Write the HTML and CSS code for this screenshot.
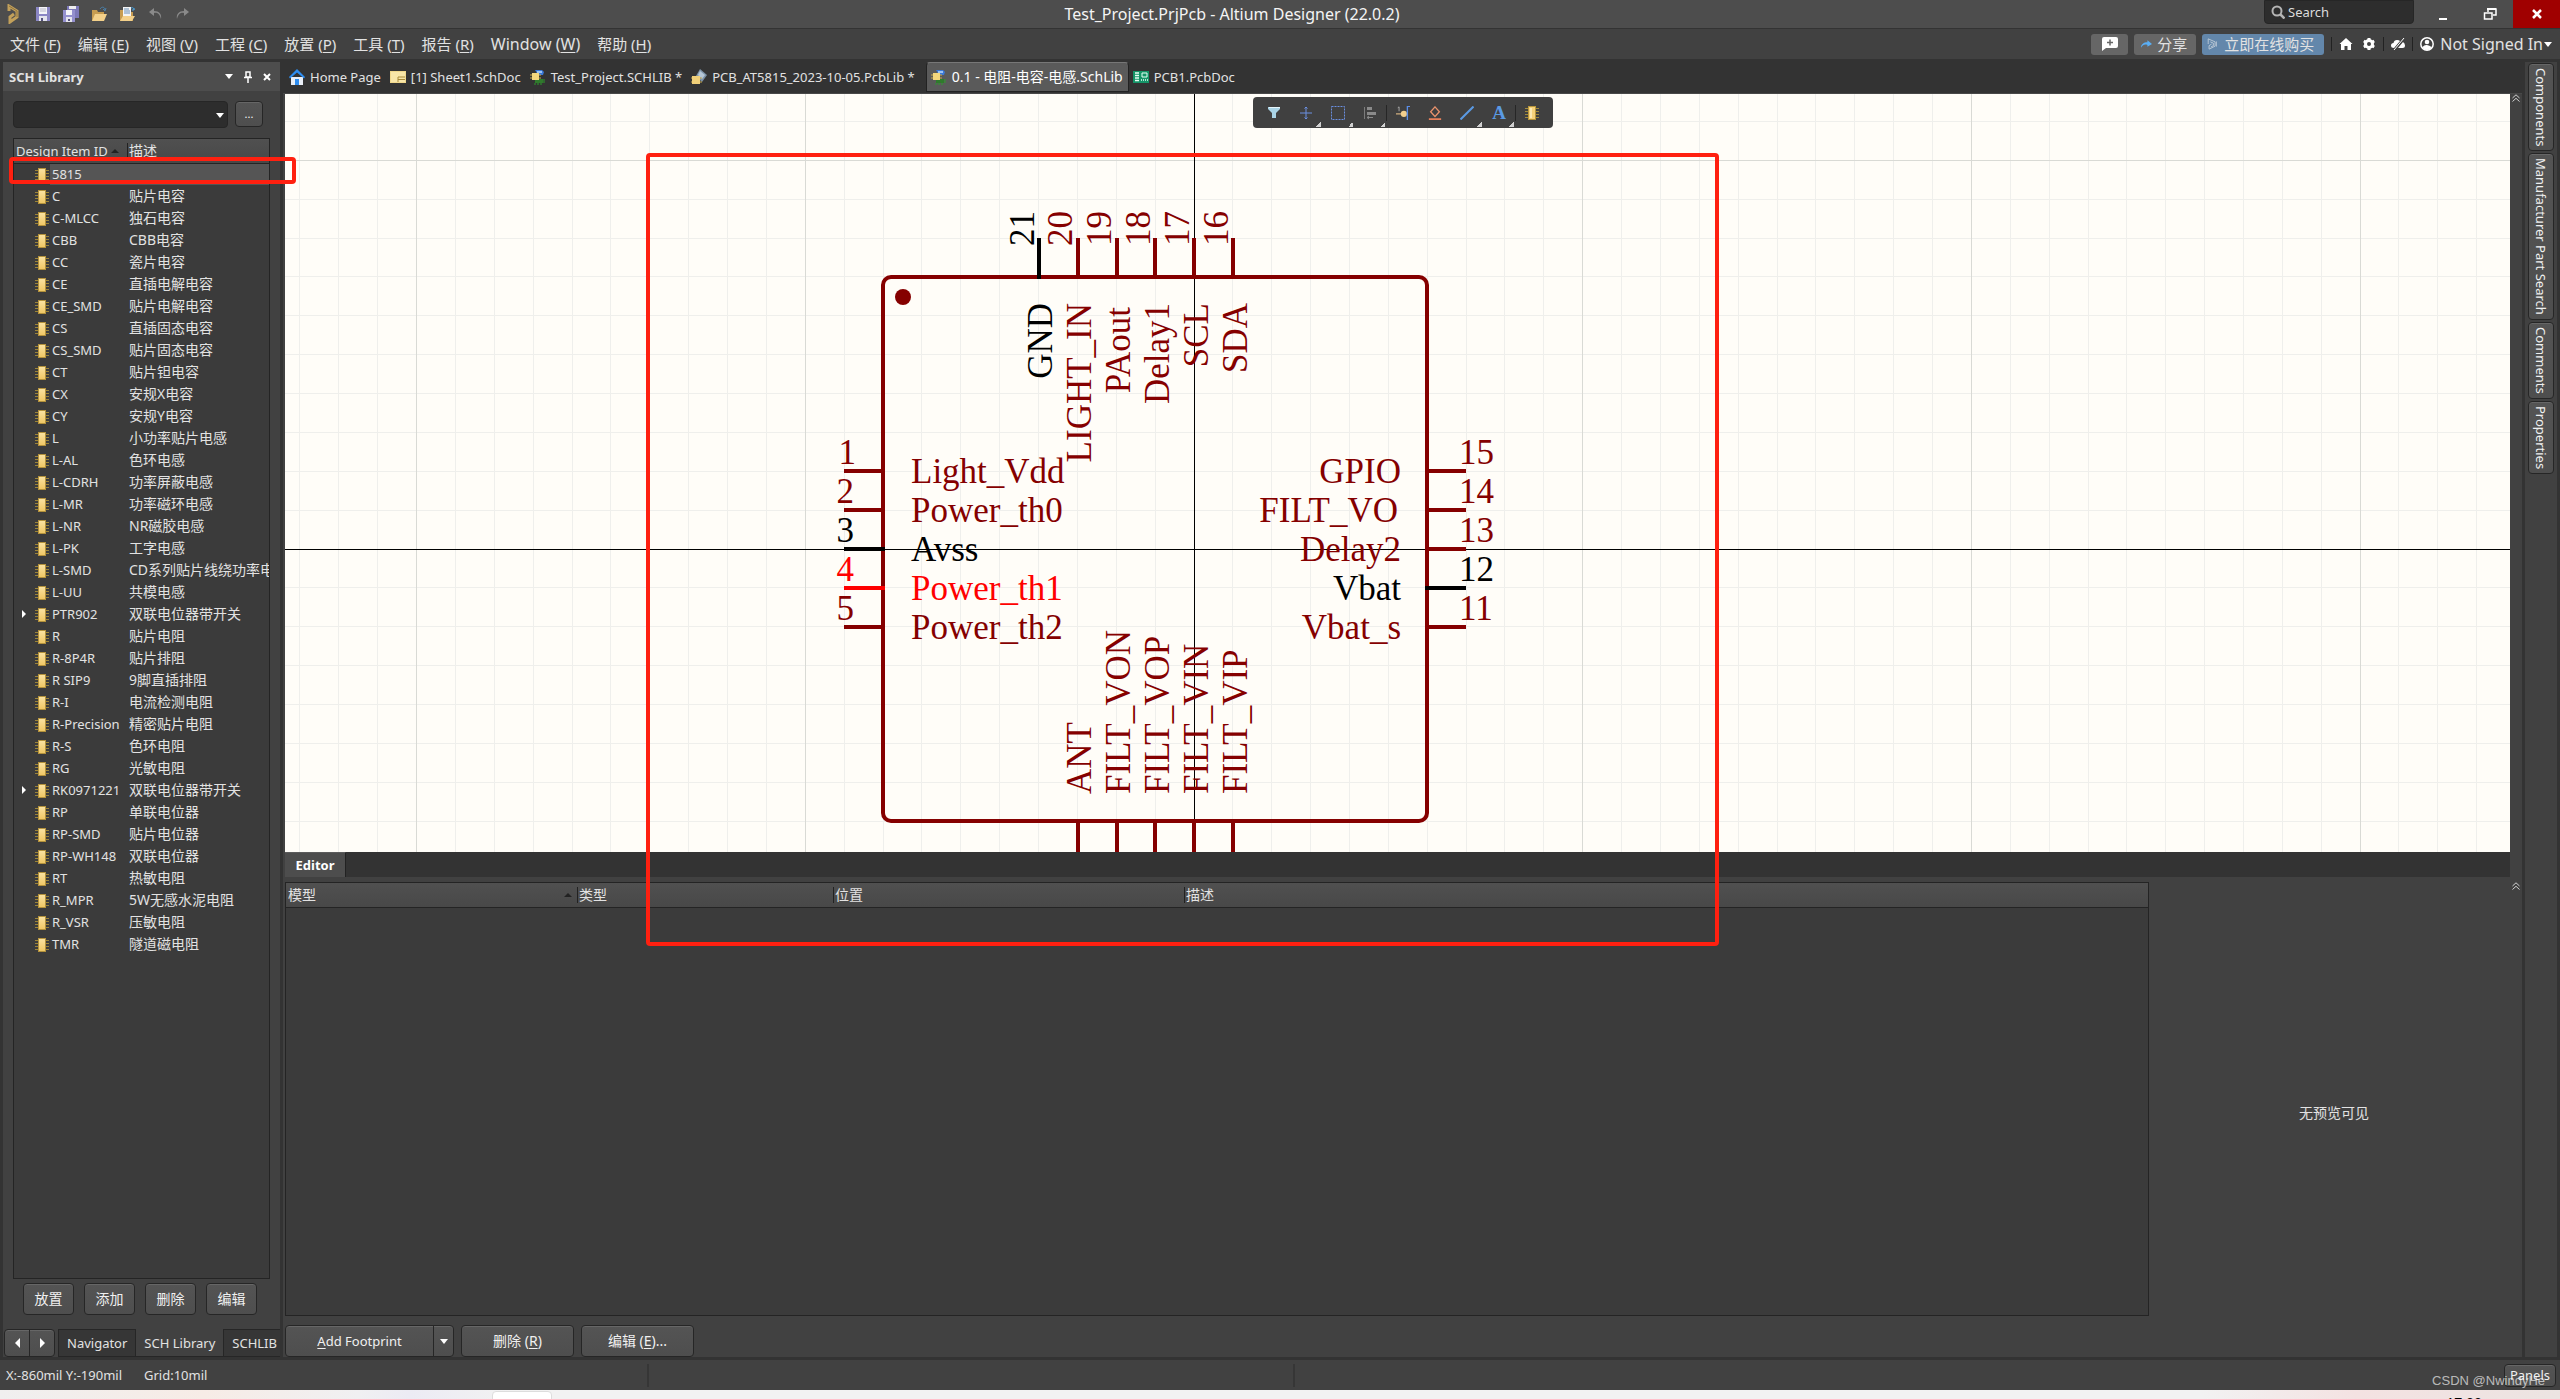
FILE: index.html
```html
<!DOCTYPE html>
<html lang="zh-CN">
<head>
<meta charset="utf-8">
<title>Test_Project.PrjPcb - Altium Designer (22.0.2)</title>
<link rel="stylesheet" href="styles.css">
</head>
<body>
<svg class="defs" aria-hidden="true">
  <symbol id="i-schlib" viewBox="0 0 16 16"><path d="M5 1h7l2 2-1 3H8z" fill="#3a78d8"/><path d="M7 2h5v2H7z" fill="#9cc4f4"/><path d="M5 10h8v4H5z" fill="#2f7a2c"/><path d="M5 14v2M8 14v2M11 14v2M13 11h2M13 13h2" stroke="#2f9a2c"/><rect x="2" y="4" width="7" height="7" fill="#f2d67c"/><path d="M0 6h2M0 9h2M9 6h2M9 9h2" stroke="#c9a94a"/></symbol>
  <symbol id="i-chip" viewBox="0 0 14 14"><path d="M0 2.5h14M0 5.500h14M0 8.500h14M0 11.500h14" stroke="#a08a3c"/><rect x="3.500" y=".5" width="7" height="13" fill="#f6d27a" stroke="#b8963c"/><path d="M5 2h2v10H5z" fill="#fbe9b4"/></symbol>
  <symbol id="i-up" viewBox="0 0 8 8"><path d="M.5 4 4 .8 7.500 4M.5 7.500 4 4.300 7.500 7.500" fill="none" stroke="#d0d0d0"/></symbol>
</svg>

<header class="titlebar">
  <div class="quick">
    <svg class="logo" viewBox="0 0 14 20"><path d="M2 7V2l8 5v6l-7 5v-5l4-3" fill="none" stroke="#c2a05a" stroke-width="3"/><path d="M2 2l8 5v6" fill="none" stroke="#8f7440" stroke-width="1"/></svg>
    <button aria-label="保存"><svg viewBox="0 0 16 16"><path d="M1 1h14v14H1z" fill="#8a86c4"/><path d="M4 1h8v7H4z" fill="#f4f4f8"/><path d="M4 10h8v5H4z" fill="#e4e4ee"/><path d="M6 12h2v3H6z" fill="#55527e"/><path d="M5 3h6M5 5h6" stroke="#b9b9c8"/></svg></button>
    <button aria-label="全部保存"><svg viewBox="0 0 16 16"><path d="M4 0h12v12H4z" fill="#7d79b8"/><path d="M6 0h7v3H6z" fill="#eee"/><path d="M0 4h12v12H0z" fill="#9490ce"/><path d="M3 4h6v5H3z" fill="#f4f4f8"/><path d="M3 11h6v5H3z" fill="#e4e4ee"/><path d="M5 13h2v2H5z" fill="#55527e"/></svg></button>
    <button aria-label="打开"><svg viewBox="0 0 16 16"><path d="M1 15V4h5l1 2h6v9z" fill="#c79c50"/><path d="m1 15 3-7h12l-3 7z" fill="#f3d08a"/><path d="M9 3c2-3 5-2 5 1M12 3l2 2 1-3" fill="none" stroke="#4a7fa8"/></svg></button>
    <button aria-label="打开工程"><svg viewBox="0 0 16 16"><path d="M1 15V4h5l1 2h7v9z" fill="#c79c50"/><path d="M4 1h8v10H4z" fill="#f4f4f4"/><path d="M5 3h5M5 5h6M5 7h6" stroke="#6a90b8"/><path d="m1 15 3-5h12l-3 5z" fill="#f3d08a"/><path d="M12 2c2-1 3 0 3 2M13 4h2V2" fill="none" stroke="#4a9fd8"/></svg></button>
    <button aria-label="撤销"><svg viewBox="0 0 16 16"><path d="M7 2 2 6l5 4V7c4-1 6 2 7 6 1-5-2-8-7-8z" fill="#8a8a8a"/></svg></button>
    <button aria-label="重做"><svg viewBox="0 0 16 16"><path d="m9 2 5 4-5 4V7C5 6 3 9 2 13 1 8 4 5 9 5z" fill="#8a8a8a"/></svg></button>
  </div>
  <h1>Test_Project.PrjPcb - Altium Designer (22.0.2)</h1>
  <label class="search"><svg viewBox="0 0 14 14"><circle cx="6" cy="6" r="4.500" fill="none" stroke="#b4b4b4" stroke-width="2"/><path d="m9.500 9.500 4 4" stroke="#b4b4b4" stroke-width="2.500"/></svg><input type="text" placeholder="Search" aria-label="Search"></label>
  <div class="winctl">
    <button aria-label="最小化"><svg viewBox="0 0 14 14"><path d="M3 11h8v2H3z" fill="#fff"/></svg></button>
    <button aria-label="还原"><svg viewBox="0 0 14 14"><path d="M5 5V2h8v6h-3M1.500 6H9v6H1.500z" fill="none" stroke="#fff" stroke-width="1.500"/><path d="M4 2h9" stroke="#fff" stroke-width="2"/></svg></button>
    <button class="close" aria-label="关闭"><svg viewBox="0 0 14 14"><path d="m3 3 8 8M11 3l-8 8" stroke="#fff" stroke-width="2.500"/></svg></button>
  </div>
</header>

<div class="menubar">
  <nav class="menus">
    <button>文件 (<u>F</u>)</button><button>编辑 (<u>E</u>)</button><button>视图 (<u>V</u>)</button><button>工程 (<u>C</u>)</button><button>放置 (<u>P</u>)</button><button>工具 (<u>T</u>)</button><button>报告 (<u>R</u>)</button><button class="latin">Window (<u>W</u>)</button><button>帮助 (<u>H</u>)</button>
  </nav>
  <div class="account">
    <button class="pill note" aria-label="评论"><svg viewBox="0 0 16 14"><path d="M2 0h12q2 0 2 2v7q0 2-2 2H4l-4 3V2q0-2 2-2z" fill="#fff"/><path d="M8 2.500v6M5 5.500h6" stroke="#666" stroke-width="1.500"/></svg></button>
    <button class="pill"><svg viewBox="0 0 12 10"><path d="M7 1l5 4-5 3V6C4 5 2 6 0 9c0-4 3-6 7-6z" fill="#5aaef4"/></svg>分享</button>
    <button class="pill buy"><svg viewBox="0 0 12 14"><path d="M1 5V1l8 3.500v5L2 13V9l3-2M3.500 4.500 7 6v3l-3 1.500M1 7V5M10.500 4v6" fill="none" stroke="#c4d0da"/></svg>立即在线购买</button>
    <i class="sep"></i>
    <button class="ico" aria-label="主页"><svg viewBox="0 0 14 14"><path d="m7 1 6.500 6H12v6H8.500V9h-3v4H2V7H.5z" fill="#fff"/></svg></button>
    <button class="ico" aria-label="设置"><svg viewBox="0 0 14 14"><circle cx="7" cy="7" r="3.500" fill="none" stroke="#fff" stroke-width="3"/><path d="M7 1v2M7 11v2M1.800 4l1.800 1M10.400 9l1.800 1M1.800 10l1.800-1M10.400 5l1.800-1" stroke="#fff" stroke-width="3"/></svg></button>
    <i class="sep"></i>
    <button class="ico" aria-label="离线"><svg viewBox="0 0 14 14"><path d="M3 11Q0 11 0 8.500 0 6 2.500 6 3 3 6 3q2 0 3 1zM7 11l5-6q2 1 2 3.500Q14 11 11.500 11z" fill="#fff"/><path d="M13 1 3 13" stroke="#fff" stroke-width="1"/></svg></button>
    <i class="sep"></i>
    <button class="user"><svg viewBox="0 0 14 14"><circle cx="7" cy="7" r="6.200" fill="none" stroke="#fff" stroke-width="1.500"/><circle cx="7" cy="5" r="2.300" fill="#fff"/><path d="M2.500 10q2-2.500 4.500-2t4.500 2Q10 13 7 13t-4.500-3z" fill="#fff"/></svg>Not Signed In<b class="caret"></b></button>
  </div>
</div>

<div class="workspace">
  <aside class="panel">
    <div class="panel-head"><h2>SCH Library</h2><span class="caret"></span><svg viewBox="0 0 8 12"><path d="M2 1h4v5H2zM0 6.500h8M4 6v6" fill="none" stroke="#fff" stroke-width="1.500"/></svg><svg class="x" viewBox="0 0 8 8"><path d="m1 1 6 6M7 1 1 7" stroke="#fff" stroke-width="2"/></svg></div>
    <div class="filter"><select aria-label="筛选"><option></option></select><span class="caret"></span><button class="btn">...</button></div>
    <div class="listbox">
      <table class="items">
        <thead><tr><th>Design Item ID <span class="sort"></span></th><th>描述</th></tr></thead>
        <tbody>
          <tr class="sel"><td>5815</td><td></td></tr>
          <tr><td>C</td><td>贴片电容</td></tr>
          <tr><td>C-MLCC</td><td>独石电容</td></tr>
          <tr><td>CBB</td><td>CBB电容</td></tr>
          <tr><td>CC</td><td>瓷片电容</td></tr>
          <tr><td>CE</td><td>直插电解电容</td></tr>
          <tr><td>CE_SMD</td><td>贴片电解电容</td></tr>
          <tr><td>CS</td><td>直插固态电容</td></tr>
          <tr><td>CS_SMD</td><td>贴片固态电容</td></tr>
          <tr><td>CT</td><td>贴片钽电容</td></tr>
          <tr><td>CX</td><td>安规X电容</td></tr>
          <tr><td>CY</td><td>安规Y电容</td></tr>
          <tr><td>L</td><td>小功率贴片电感</td></tr>
          <tr><td>L-AL</td><td>色环电感</td></tr>
          <tr><td>L-CDRH</td><td>功率屏蔽电感</td></tr>
          <tr><td>L-MR</td><td>功率磁环电感</td></tr>
          <tr><td>L-NR</td><td>NR磁胶电感</td></tr>
          <tr><td>L-PK</td><td>工字电感</td></tr>
          <tr><td>L-SMD</td><td>CD系列贴片线绕功率电感</td></tr>
          <tr><td>L-UU</td><td>共模电感</td></tr>
          <tr class="node"><td>PTR902</td><td>双联电位器带开关</td></tr>
          <tr><td>R</td><td>贴片电阻</td></tr>
          <tr><td>R-8P4R</td><td>贴片排阻</td></tr>
          <tr><td>R SIP9</td><td>9脚直插排阻</td></tr>
          <tr><td>R-I</td><td>电流检测电阻</td></tr>
          <tr><td>R-Precision</td><td>精密贴片电阻</td></tr>
          <tr><td>R-S</td><td>色环电阻</td></tr>
          <tr><td>RG</td><td>光敏电阻</td></tr>
          <tr class="node"><td>RK0971221</td><td>双联电位器带开关</td></tr>
          <tr><td>RP</td><td>单联电位器</td></tr>
          <tr><td>RP-SMD</td><td>贴片电位器</td></tr>
          <tr><td>RP-WH148</td><td>双联电位器</td></tr>
          <tr><td>RT</td><td>热敏电阻</td></tr>
          <tr><td>R_MPR</td><td>5W无感水泥电阻</td></tr>
          <tr><td>R_VSR</td><td>压敏电阻</td></tr>
          <tr><td>TMR</td><td>隧道磁电阻</td></tr>
        </tbody>
      </table>
    </div>
    <div class="actions"><button class="btn">放置</button><button class="btn">添加</button><button class="btn">删除</button><button class="btn">编辑</button></div>
    <div class="dock">
      <div class="pager btn"><button aria-label="上一个"><span class="left"></span></button><button aria-label="下一个"><span class="right"></span></button></div>
      <div class="dock-tabs"><button>Navigator</button><button class="on">SCH Library</button><button>SCHLIB</button></div>
    </div>
  </aside>

  <main class="editor">
    <nav class="tabs">
      <button><svg viewBox="0 0 16 16"><path d="M2 8h12v8H2z" fill="#e9eef6"/><path d="M8 0 0 8l1 1.500 7-6 7 6L16 8z" fill="#2e8df0"/><path d="M6 10h4v6H6z" fill="#2e8df0"/></svg>Home Page</button>
      <button><svg viewBox="0 0 16 16"><path d="M0 2h16v12H0z" fill="#f0d88c"/><path d="M1 3h14v10H1z" fill="#f8e6a8"/><path d="M8 8h7M8 10.500h7M8 8v5" stroke="#a88b3a"/></svg>[1] Sheet1.SchDoc</button>
      <button><svg viewBox="0 0 16 16"><use href="#i-schlib"/></svg>Test_Project.SCHLIB *</button>
      <button><svg viewBox="0 0 16 16"><path d="m9 0 7 6-5 7-6-6z" fill="#7d93a8"/><path d="m9 2 5 4-3 4-4-4z" fill="#b4c6d6"/><rect x="1" y="7" width="8" height="8" fill="#f0cf78"/><path d="M0 9h1M0 13h1M9 9h2M9 13h2" stroke="#c9a94a"/></svg>PCB_AT5815_2023-10-05.PcbLib *</button>
      <button class="on"><svg viewBox="0 0 16 16"><use href="#i-schlib"/></svg>0.1 - 电阻-电容-电感.SchLib</button>
      <button><svg viewBox="0 0 16 16"><path d="M0 2h16v12H0z" fill="#159468"/><path d="M2 4h4M2 6.500h4M2 9h4M2 11.500h4M8 11h1M10 11h1M12 11h1M14 11h1" stroke="#e6fff4" stroke-width="1.500"/><path d="M9 4h5v4H9z" fill="none" stroke="#e6fff4"/></svg>PCB1.PcbDoc</button>
    </nav>
    <div class="sheet">
      <svg class="drawing">
        <g id="grid" shape-rendering="crispEdges"></g>
        <g class="chip" transform="translate(909 455)">
          <rect x="-311" y="-272" width="544" height="544" rx="8"/>
          <circle cx="-291" cy="-252" r="8"/>
          <path d="M-350-78h39M-350-39h39M-350 78h39M233-78h39M233-39h39M233 0h39M233 78h39M-116-311v39M-77-311v39M-39-311v39M0-311v39M39-311v39M-116 272v39M-77 272v39M-39 272v39M0 272v39M39 272v39"/>
          <path class="blk" d="M-350 0h41M231 39h41M-155-311v41"/>
          <path class="hot" d="M-350 39h41"/>
          <g>
            <text x="-283" y="-66">Light_Vdd</text><text x="-283" y="-27">Power_th0</text><text class="blk" x="-283" y="12">Avss</text><text class="hot" x="-283" y="51">Power_th1</text><text x="-283" y="90">Power_th2</text>
          </g>
          <g text-anchor="end">
            <text x="207" y="-66">GPIO</text><text x="204" y="-27">FILT_VO</text><text x="207" y="12">Delay2</text><text class="blk" x="207" y="51">Vbat</text><text x="207" y="90">Vbat_s</text>
            <text x="-338" y="-85">1</text><text x="-340" y="-46">2</text><text class="blk" x="-340" y="-7">3</text><text class="hot" x="-340" y="32">4</text><text x="-340" y="71">5</text>
          </g>
          <g>
            <text x="265" y="-85">15</text><text x="265" y="-46">14</text><text x="265" y="-7">13</text><text class="blk" x="265" y="32">12</text><text x="265" y="71">11</text>
          </g>
          <g transform="rotate(-90)">
            <text class="blk" x="303" y="-160">21</text><text x="303" y="-122">20</text><text x="303" y="-83">19</text><text x="303" y="-44">18</text><text x="303" y="-5">17</text><text x="303" y="34">16</text>
            <text x="-245" y="-103">ANT</text><text x="-245" y="-64">FILT_VON</text><text x="-245" y="-25">FILT_VOP</text><text x="-245" y="14">FILT_VIN</text><text x="-245" y="53">FILT_VIP</text>
          </g>
          <g transform="rotate(-90)" text-anchor="end">
            <text class="blk" x="246" y="-142">GND</text><text x="246" y="-103">LIGHT_IN</text><text x="242" y="-64">PAout</text><text x="246" y="-25">Delay1</text><text x="246" y="14">SCL</text><text x="246" y="53">SDA</text>
          </g>
        </g>
      </svg>
      <div class="tools">
        <button aria-label="过滤"><svg viewBox="0 0 14 14"><path d="M1 1h12v2L9 7v5H5V7L1 3z" fill="#a9d3e6"/><path d="M2 1h11v1H2z" fill="#e6f6fc"/></svg></button>
        <button class="more" aria-label="移动"><svg viewBox="0 0 14 14"><path d="M7 1v12M1 7h12M5.500 2.500 7 1l1.500 1.500M5.500 11.500 7 13l1.500-1.500" fill="none" stroke="#6a8fe0"/></svg></button>
        <button class="more" aria-label="选择"><svg viewBox="0 0 14 14"><path d="M.5.5h13v13H.5z" fill="none" stroke="#6a8fe0" stroke-dasharray="2 1"/></svg></button>
        <button class="more" aria-label="对齐"><svg viewBox="0 0 14 14"><path d="M1.500 1v12" stroke="#7c7c7c"/><path d="M4 1h5v3H4zM4 6h9v3H4z" fill="#8a8a8a"/><path d="M4 11.500h6M6 10l-2 1.500L6 13" fill="none" stroke="#8a8a8a"/></svg></button>
        <button class="div" aria-label="引脚"><svg viewBox="0 0 16 16"><path d="M0 9h6" stroke="#c9a97c" stroke-width="1.500"/><circle cx="9" cy="9" r="3.500" fill="#f2cf8e"/><path d="M16 .5h-3V16" fill="none" stroke="#5a8ee8" stroke-width="1.500"/><path d="M2 2l1.500-1v5" fill="none" stroke="#b0b0b0"/></svg></button>
        <button aria-label="端口"><svg viewBox="0 0 16 16"><path d="m8 1 5 5.500L8 12 3 6.500z" fill="none" stroke="#e8926c" stroke-width="1.500"/><path d="M1 14h14v2H1z" fill="#e8805a"/></svg></button>
        <button class="more" aria-label="线"><svg viewBox="0 0 14 14"><path d="M.5 13.500 13.500.5" stroke="#5a9ae4" stroke-width="2"/></svg></button>
        <button class="more letter" aria-label="文本">A</button>
        <button class="div" aria-label="器件"><svg viewBox="0 0 14 14"><use href="#i-chip"/></svg></button>
      </div>
    </div>
    <svg class="fold" viewBox="0 0 8 8"><use href="#i-up"/></svg>
    <section class="models">
      <div class="subtabs"><button>Editor</button></div>
      <div class="split">
        <div class="left-col">
          <div class="grid-box">
            <table><thead><tr><th>模型 <span class="sort"></span></th><th>类型</th><th>位置</th><th>描述</th></tr></thead></table>
          </div>
          <div class="cmds"><div class="btn combo"><button><u>A</u>dd Footprint</button><button aria-label="更多"><span class="caret"></span></button></div><button class="btn">删除 (<u>R</u>)</button><button class="btn">编辑 (<u>E</u>)...</button></div>
        </div>
        <div class="preview">无预览可见</div>
      </div>
    </section>
    <svg class="fold low" viewBox="0 0 8 8"><use href="#i-up"/></svg>
  </main>

  <aside class="rail"><button class="btn">Components</button><button class="btn">Manufacturer Part Search</button><button class="btn">Comments</button><button class="btn">Properties</button></aside>
</div>

<footer class="status"><span class="pos">X:-860mil Y:-190mil</span><span class="cell">Grid:10mil</span><span class="cell rule"></span><span class="cell rule"></span><button class="btn">Panels</button></footer>
<div class="taskbar"><span class="task"></span><time>17:00</time></div>

<div class="mark item-mark"></div>
<div class="mark chip-mark"></div>
<div class="watermark">CSDN @NwindyHe</div>
<script src="grid.js"></script>
</body>
</html>
```
FILE: styles.css
```css
* { box-sizing: border-box; }
html, body { height: 100%; }
body {
  margin: 0;
  display: flex;
  flex-direction: column;
  min-height: 100vh;
  overflow: hidden;
  background: #333;
  color: #e2e2e2;
  font: 13px/18px "Noto Sans", "Noto Sans CJK SC", sans-serif;
}
button, input, select { font: inherit; color: inherit; }
button { margin: 0; padding: 0; border: 0; background: none; white-space: nowrap; }
h1, h2 { margin: 0; font-weight: 400; }
svg { display: block; flex: none; }
table { border-collapse: collapse; table-layout: fixed; width: 100%; }
th { font-weight: 400; text-align: left; padding: 0; }
td { padding: 0; }
u { text-underline-offset: 2px; }
.defs { position: absolute; width: 0; height: 0; }

.btn {
  background: linear-gradient(#545454, #4e4e4e);
  border: 1px solid #262626;
  border-radius: 4px;
  box-shadow: inset 0 1px #666;
  color: #f0f0f0;
}
.caret { width: 0; height: 0; border: 4px solid transparent; border-top: 5px solid #fff; border-bottom: 0; }
.sort { display: inline-block; border: 4px solid transparent; border-bottom: 4px solid #222; border-top: 0; vertical-align: 3px; }

/* Title bar */
.titlebar { display: flex; height: 29px; background: #4d4d4d; border-bottom: 1px solid #333; }
.quick { display: flex; align-items: center; gap: 12px; width: 200px; padding-left: 7px; }
.quick svg { width: 16px; height: 16px; }
.quick .logo { width: 14px; height: 20px; margin-right: 2px; }
.titlebar h1 { flex: 1; text-align: center; font-size: 16px; line-height: 28px; color: #f4f4f4; }
.search { display: flex; align-items: center; gap: 3px; width: 150px; height: 24px; padding: 0 6px; background: #2d2d2d; border: 1px solid #262626; border-radius: 0 0 4px 4px; }
.search svg { width: 14px; height: 14px; }
.search input { width: 110px; border: 0; padding: 0; background: none; outline: 0; }
.search input::placeholder { color: #dcdcdc; opacity: 1; }
.winctl { display: flex; width: 146px; padding-left: 6px; }
.winctl button { flex: 1; display: grid; place-items: center; height: 28px; }
.winctl svg { width: 14px; height: 14px; }
.winctl .close { background: #a00000; }

/* Menu bar */
.menubar { display: flex; justify-content: space-between; align-items: center; height: 30px; background: #414141; padding: 0 8px 0 10px; }
.menus { display: flex; gap: 17px; font-size: 15px; line-height: 30px; }
.menus .latin { font-size: 16px; }
.account { display: flex; align-items: center; font-size: 15px; }
.pill { display: flex; align-items: center; justify-content: center; gap: 5px; height: 21px; padding: 0 9px 0 7px; margin-right: 6px; border-radius: 3px; background: #666; }
.pill svg { width: 11px; height: 12px; }
.note { width: 37px; padding: 0; }
.note svg { width: 16px; height: 14px; }
.buy { background: #6387ab; gap: 6px; padding: 0 10px 0 5px; }
.sep { width: 1px; height: 14px; background: #222; margin: 0 7px 0 1px; }
.ico { margin-right: 6px; }
.ico + .ico { margin-left: 3px; }
.ico svg, .user svg { width: 14px; height: 14px; }
.user { display: flex; align-items: center; gap: 6px; font-size: 16px; }
.user .caret { margin-left: -5px; }

/* Workspace */
.workspace { flex: 1; min-height: 0; display: grid; grid-template-columns: 277px minmax(0, 1fr) 32px; column-gap: 3px; padding: 0 3px; }
.workspace > .panel, .rail { margin-top: 3px; }
.panel { display: flex; flex-direction: column; min-height: 0; margin-bottom: 3px; background: #414141; }
.panel-head { display: flex; align-items: center; gap: 11px; height: 29px; padding: 0 9px 0 6px; background: #4d4d4d; }
.panel-head h2 { flex: 1; font-size: 13px; font-weight: 700; }
.panel-head svg { width: 8px; height: 12px; }
.panel-head .x { height: 8px; }
.filter { display: grid; grid-template-columns: 215px 28px; gap: 7px; padding: 10px; position: relative; }
.filter select { appearance: none; height: 27px; background: #2d2d2d; border: 1px solid #262626; border-radius: 4px; }
.filter .caret { position: absolute; left: 213px; top: 22px; }
.filter .btn { height: 26px; font-size: 11px; }
.listbox { flex: 1; min-height: 0; margin: 0 10px; border: 1px solid #242424; background: #3b3b3b; overflow: hidden; }
.items th { height: 24px; padding-left: 2px; background: linear-gradient(#505050, #484848); border-bottom: 1px solid #242424; line-height: 20px; }
.items th:first-child { width: 113px; }
.items th + th { font-size: 14px; background: linear-gradient(#222, #222) 0 4px / 1px 16px no-repeat, linear-gradient(#505050, #484848); }
.items td { height: 22px; line-height: 20px; white-space: nowrap; overflow: hidden; }
.items td + td { padding-left: 2px; font-size: 14px; }
.items td:first-child { position: relative; padding-left: 8px; }
.items td:first-child::before {
  content: "";
  display: inline-block;
  width: 14px;
  height: 14px;
  margin: 0 3px 0 13px;
  vertical-align: -3px;
  background:
    linear-gradient(#fae2a0, #f0c866) 4px 1px / 6px 12px no-repeat,
    linear-gradient(#b4923c, #b4923c) 3px 0 / 8px 14px no-repeat,
    repeating-linear-gradient(transparent 0 2px, #9c8438 2px 3px);
}
.node td:first-child::after { content: ""; position: absolute; left: 8px; top: 7px; border: 4px solid transparent; border-left: 4px solid #fff; border-right: 0; }
.sel td { background: #555; }
.sel td:first-child { background: linear-gradient(90deg, #3b3b3b 36px, #555 36px); }
.actions { display: flex; gap: 10px; padding: 4px 20px 14px; }
.actions .btn { width: 51px; height: 32px; font-size: 14px; }
.dock { display: flex; gap: 3px; height: 28px; padding-left: 1px; overflow: hidden; }
.pager { display: flex; width: 51px; flex: none; }
.pager button { flex: 1; display: grid; place-items: center; }
.pager button + button { border-left: 1px solid #262626; }
.left, .right { border: 5px solid transparent; }
.left { border-right-color: #fff; border-left: 0; }
.right { border-left-color: #fff; border-right: 0; }
.dock-tabs { display: flex; }
.dock-tabs button { padding: 0 8px; background: #363636; border: 1px solid #262626; border-right: 0; }
.dock-tabs .on { background: #414141; border-top: 0; }

/* Document area */
.editor { display: grid; grid-template-columns: minmax(0, 1fr) 12px; grid-template-rows: 35px 3fr 2fr; background: #414141; padding-left: 2px; margin-left: -3px; border-left: 3px solid #333; margin-bottom: 3px; }
.tabs { grid-column: 1 / -1; display: flex; align-items: flex-start; padding-top: 3px; margin-left: -2px; background: #333; border-bottom: 1px solid #484848; }
.tabs button { display: flex; align-items: center; gap: 5px; height: 30px; padding: 0 5px 0 4px; }
.tabs button:first-child { margin-left: 2px; }
.tabs svg { width: 16px; height: 16px; }
.tabs .on { margin-left: 6px; background: #5a5a5a; border: 1px solid #222; border-top-color: #777; border-radius: 4px 4px 0 0; color: #fff; font-size: 14px; }
.sheet { position: relative; min-height: 0; background: #fffdf8; overflow: hidden; }
.drawing { position: absolute; width: 100%; height: 100%; }
.drawing .minor { stroke: #efefec; }
.drawing .major { stroke: #d9dad5; }
.drawing .axis { stroke: #000; }
.chip path, .chip rect { fill: none; stroke: #850000; stroke-width: 4; }
.chip circle { fill: #850000; }
.chip text { fill: #850000; font: 35px "Liberation Serif", serif; }
.chip text.blk { fill: #000; }
.chip text.hot { fill: #f00; }
.chip path.blk { stroke: #000; }
.chip path.hot { stroke: #f00; }
.tools { position: absolute; left: 968px; top: 3px; display: flex; height: 31px; padding: 0 5px; background: #404040; border-radius: 4px; }
.tools button { position: relative; display: grid; place-items: center; width: 32px; }
.tools svg { width: 14px; height: 14px; }
.tools .more::after { content: ""; position: absolute; right: 1px; bottom: 1px; width: 5px; height: 5px; background: linear-gradient(135deg, transparent 50%, #d0d0d0 50%); }
.tools .div { width: 33px; }
.tools .div::before { content: ""; position: absolute; left: 0; top: 8px; width: 1px; height: 16px; background: #262626; }
.tools .letter { font: 700 19px "Liberation Serif", serif; color: #5a9ae4; }
.fold { width: 8px; height: 8px; margin: 0 auto; }
.low { margin-top: 30px; }
.models { display: flex; flex-direction: column; min-height: 0; }
.subtabs { height: 25px; background: #333; }
.subtabs button { height: 25px; width: 61px; background: #4d4d4d; border-right: 1px solid #222; border-top: 1px solid #5c5c5c; font-weight: 700; color: #fff; }
.split { flex: 1; display: grid; grid-template-columns: 84fr 16fr; }
.left-col { display: flex; flex-direction: column; padding: 5px 5px 0 0; }
.grid-box { flex: 1; border: 1px solid #242424; background: #3b3b3b; }
.grid-box th { height: 25px; padding-left: 2px; font-size: 14px; line-height: 20px; border-bottom: 1px solid #242424; background: linear-gradient(#222, #222) 0 4px / 1px 16px no-repeat, linear-gradient(#505050, #484848); }
.grid-box th:nth-child(1) { width: 291px; background: linear-gradient(#505050, #484848); }
.grid-box th:nth-child(2) { width: 256px; }
.grid-box th:nth-child(3) { width: 351px; }
.grid-box .sort { float: right; margin: 8px 5px 0 0; }
.cmds { display: flex; gap: 7px; padding-top: 9px; }
.cmds > .btn { width: 113px; height: 32px; font-size: 14px; }
.cmds > .combo { display: flex; width: 169px; font-size: 13px; }
.combo button:first-child { flex: 1; }
.combo button + button { display: grid; place-items: center; width: 20px; border-left: 1px solid #262626; }
.preview { display: grid; place-items: center; padding: 0 0 8px 4px; font-size: 14px; }
.rail { display: flex; flex-direction: column; gap: 2px; padding: 1px 3px; background: #414141; margin-bottom: 3px; }
.rail .btn { width: 26px; padding: 4px 0; writing-mode: vertical-rl; font-size: 13px; }

/* Status bar and desktop edge */
.status { display: flex; align-items: center; height: 30px; padding: 0 4px 0 6px; background: #414141; }
.status .pos { width: 138px; }
.status .cell { flex: 0 0 503px; }
.status .rule { flex: 0 0 646px; height: 23px; border-left: 2px solid #363636; }
.status .btn { margin-left: auto; padding: 0 5px; height: 23px; }
.taskbar { height: 9px; overflow: hidden; background: linear-gradient(90deg, #f0efef, #f7ece6 8%, #f0f0f2 14%, #ecebf4 16%, #f2f2f2 20%, #f2f2f2 86%, #f4e2e2 92%, #ece4e2); display: flex; justify-content: space-between; padding: 1px 78px 0 492px; }
.task { width: 60px; height: 16px; background: #fff; border: 1px solid #ddd; border-radius: 4px; }
.taskbar time { margin-top: 3px; font-size: 14px; color: #000; }

/* Callouts drawn over the window */
.mark { position: absolute; border: 4px solid #ff2010; border-radius: 4px; pointer-events: none; }
.item-mark { left: 9px; top: 157px; width: 287px; height: 27px; }
.chip-mark { left: 646px; top: 153px; width: 1073px; height: 793px; }
.watermark { position: absolute; right: 15px; bottom: 9px; font: 13px/18px "Liberation Sans", sans-serif; color: rgba(255, 255, 255, .65); }
```
FILE: grid.js
```js
// Draws the sheet grid around the origin, with a heavier line every ten steps.
const grid = document.getElementById('grid');
const STEP = 38.87, OX = 909, OY = 455;
function drawGrid() {
  const { width, height } = grid.ownerSVGElement.getBoundingClientRect();
  const d = { minor: '', major: '', axis: '' };
  const kind = i => i === 0 ? 'axis' : i % 10 === 0 ? 'major' : 'minor';
  for (let i = Math.ceil(-OX / STEP); OX + i * STEP < width; i++)
    d[kind(i)] += `M${Math.floor(OX + i * STEP) + 0.5} 0V${height}`;
  for (let i = Math.ceil(-OY / STEP); OY + i * STEP < height; i++)
    d[kind(i)] += `M0 ${Math.floor(OY + i * STEP) + 0.5}H${width}`;
  grid.innerHTML = Object.keys(d).map(k => `<path class="${k}" d="${d[k]}"/>`).join('');
}
drawGrid();
addEventListener('resize', drawGrid);
```
